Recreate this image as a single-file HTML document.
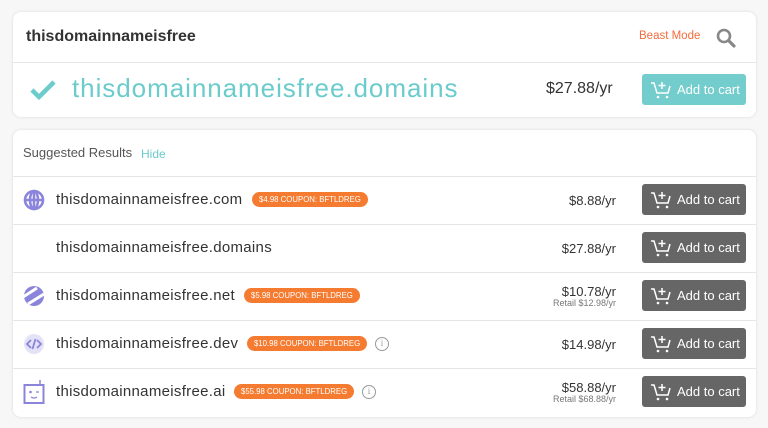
<!DOCTYPE html>
<html><head><meta charset="utf-8"><style>
*{box-sizing:border-box;margin:0;padding:0}
body{width:768px;height:428px;background:#f7f7f7;font-family:"Liberation Sans",sans-serif;position:relative;overflow:hidden;color:#333}
.card{position:absolute;left:13px;width:743px;background:#fff;border-radius:8px;box-shadow:0 0 3px rgba(0,0,0,.12)}
.a{position:absolute}
.line{position:absolute;left:0;right:0;height:1px;background:#e6e6e6}
.btn{position:absolute;left:629px;width:104px;height:31px;border-radius:3px;background:#666;color:#fff;font-size:13px;display:flex;align-items:center;padding-left:8px}
.btn svg{margin-right:5px}
.dom{position:absolute;left:43px;font-size:15px;color:#333;letter-spacing:.3px}
.cp{position:absolute;height:15px;border-radius:8px;background:#f47b30;color:#fff;font-size:7.8px;line-height:15px;padding:0 7px;white-space:nowrap}
.pr{position:absolute;right:140px;text-align:right;font-size:13px;color:#333}
.rt{font-size:9px;color:#777;display:block;margin-top:-1px}
.info{position:absolute;width:14px;height:14px;border:1.3px solid #999;border-radius:50%;color:#999;font-size:9px;text-align:center;line-height:11px;font-family:"Liberation Serif",serif}
</style></head><body>
<div class="card" style="top:12px;height:105px">
 <div class="a" style="left:13px;top:16px;font-size:16px;font-weight:bold;color:#333">thisdomainnameisfree</div>
 <div class="a" style="left:626px;top:18px;font-size:11.5px;color:#f36c3b">Beast Mode</div>
 <svg class="a" style="left:702px;top:15px" width="22" height="22" viewBox="0 0 22 22"><circle cx="9" cy="9" r="6" fill="none" stroke="#888" stroke-width="2.6"/><path d="M13.5 13.5L19 19" stroke="#888" stroke-width="3.2" stroke-linecap="round"/></svg>
 <div class="line" style="top:50px"></div>
 <svg class="a" style="left:16px;top:67px" width="28" height="22" viewBox="0 0 28 22"><path d="M3 11l7 7L25 3" fill="none" stroke="#6ccbcb" stroke-width="4.5"/></svg>
 <div class="a" style="left:59px;top:61px;font-size:26px;color:#6ccbcb;letter-spacing:.95px">thisdomainnameisfree.domains</div>
 <div class="a" style="left:533px;top:68px;font-size:16px;color:#333">$27.88/yr</div>
 <div class="btn" style="top:62px;background:#74cdcd"><svg width="22" height="20" viewBox="0 0 22 20"><path d="M1 3h3l3 10h11l2-7" fill="none" stroke="#fff" stroke-width="1.5"/><path d="M12 2v7M8.5 5.5h7" stroke="#fff" stroke-width="1.5"/><circle cx="8" cy="17" r="1.3" fill="#fff"/><circle cx="17" cy="17" r="1.3" fill="#fff"/></svg>Add to cart</div>
</div>
<div class="card" style="top:130px;height:287px">
 <div class="a" style="left:10px;top:15px;font-size:13px;color:#555">Suggested Results</div>
 <div class="a" style="left:128px;top:17px;font-size:12px;color:#6ccbcb">Hide</div>
 <div class="line" style="top:46px"></div>
 <div class="line" style="top:94px"></div>
 <div class="line" style="top:142px"></div>
 <div class="line" style="top:190px"></div>
 <div class="line" style="top:238px"></div>
 <svg class="a" style="left:10px;top:59px" width="22" height="22" viewBox="0 0 22 22"><g fill="none" stroke="#8b84db" stroke-width="2.6"><circle cx="11" cy="11" r="9"/><ellipse cx="11" cy="11" rx="4" ry="9"/><path d="M2 11h18M11 2v18"/></g></svg>
 <div class="dom" style="top:61px">thisdomainnameisfree.com</div>
 <div class="cp" style="left:239px;top:62px">$4.98 COUPON: BFTLDREG</div>
 <div class="pr" style="top:63px">$8.88/yr</div>
 <div class="btn" style="top:54px"><svg width="22" height="20" viewBox="0 0 22 20"><path d="M1 3h3l3 10h11l2-7" fill="none" stroke="#fff" stroke-width="1.5"/><path d="M12 2v7M8.5 5.5h7" stroke="#fff" stroke-width="1.5"/><circle cx="8" cy="17" r="1.3" fill="#fff"/><circle cx="17" cy="17" r="1.3" fill="#fff"/></svg>Add to cart</div>
 <div class="dom" style="top:109px">thisdomainnameisfree.domains</div>
 <div class="pr" style="top:111px">$27.88/yr</div>
 <div class="btn" style="top:102px"><svg width="22" height="20" viewBox="0 0 22 20"><path d="M1 3h3l3 10h11l2-7" fill="none" stroke="#fff" stroke-width="1.5"/><path d="M12 2v7M8.5 5.5h7" stroke="#fff" stroke-width="1.5"/><circle cx="8" cy="17" r="1.3" fill="#fff"/><circle cx="17" cy="17" r="1.3" fill="#fff"/></svg>Add to cart</div>
 <svg class="a" style="left:10px;top:155px" width="22" height="22" viewBox="0 0 22 22"><circle cx="11" cy="11" r="10" fill="#8b84db"/><path d="M0 12L14 3M5 19L21 9" stroke="#fff" stroke-width="3"/></svg>
 <div class="dom" style="top:157px">thisdomainnameisfree.net</div>
 <div class="cp" style="left:231px;top:158px">$5.98 COUPON: BFTLDREG</div>
 <div class="pr" style="top:154px">$10.78/yr<span class="rt">Retail $12.98/yr</span></div>
 <div class="btn" style="top:150px"><svg width="22" height="20" viewBox="0 0 22 20"><path d="M1 3h3l3 10h11l2-7" fill="none" stroke="#fff" stroke-width="1.5"/><path d="M12 2v7M8.5 5.5h7" stroke="#fff" stroke-width="1.5"/><circle cx="8" cy="17" r="1.3" fill="#fff"/><circle cx="17" cy="17" r="1.3" fill="#fff"/></svg>Add to cart</div>
 <svg class="a" style="left:10px;top:203px" width="22" height="22" viewBox="0 0 22 22"><circle cx="11" cy="11" r="10" fill="#e4e2f7"/><path d="M8 7l-4 4 4 4M14 7l4 4-4 4M12.5 6l-3 10" fill="none" stroke="#8b84db" stroke-width="1.8"/></svg>
 <div class="dom" style="top:205px">thisdomainnameisfree.dev</div>
 <div class="cp" style="left:234px;top:206px">$10.98 COUPON: BFTLDREG</div>
 <div class="info" style="left:362px;top:207px">i</div>
 <div class="pr" style="top:207px">$14.98/yr</div>
 <div class="btn" style="top:198px"><svg width="22" height="20" viewBox="0 0 22 20"><path d="M1 3h3l3 10h11l2-7" fill="none" stroke="#fff" stroke-width="1.5"/><path d="M12 2v7M8.5 5.5h7" stroke="#fff" stroke-width="1.5"/><circle cx="8" cy="17" r="1.3" fill="#fff"/><circle cx="17" cy="17" r="1.3" fill="#fff"/></svg>Add to cart</div>
 <svg class="a" style="left:10px;top:249px" width="22" height="26" viewBox="0 0 22 26"><rect x="1.5" y="6" width="19" height="18" fill="none" stroke="#8b84db" stroke-width="2"/><path d="M17 6V1" stroke="#8b84db" stroke-width="1.5"/><circle cx="7.5" cy="13" r="1.3" fill="#8b84db"/><path d="M13 13h3M8 18q3 2 6 0" stroke="#8b84db" stroke-width="1.3" fill="none"/></svg>
 <div class="dom" style="top:253px">thisdomainnameisfree.ai</div>
 <div class="cp" style="left:221px;top:254px">$55.98 COUPON: BFTLDREG</div>
 <div class="info" style="left:349px;top:255px">i</div>
 <div class="pr" style="top:250px">$58.88/yr<span class="rt">Retail $68.88/yr</span></div>
 <div class="btn" style="top:246px"><svg width="22" height="20" viewBox="0 0 22 20"><path d="M1 3h3l3 10h11l2-7" fill="none" stroke="#fff" stroke-width="1.5"/><path d="M12 2v7M8.5 5.5h7" stroke="#fff" stroke-width="1.5"/><circle cx="8" cy="17" r="1.3" fill="#fff"/><circle cx="17" cy="17" r="1.3" fill="#fff"/></svg>Add to cart</div>
</div>
</body></html>
